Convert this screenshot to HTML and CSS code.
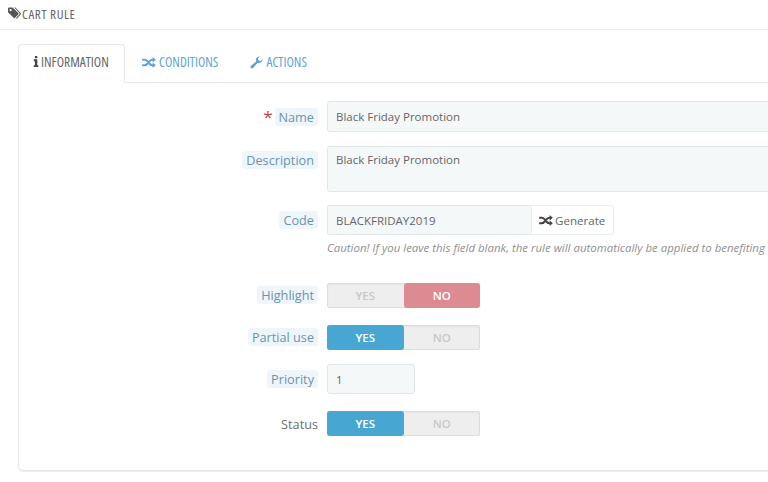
FILE: index.html
```html
<!DOCTYPE html>
<html lang="en">
<head>
<meta charset="utf-8">
<title>Cart rule</title>
<link rel="stylesheet" href="styles.css">
</head>
<body>
<div class="page">
  <header class="page-head">
    <svg class="ico ico-tag" viewBox="0 0 14 12"><path d="M0 1.2 Q0 0 1.2 0 H5 L11 6 Q11.8 6.9 11 7.7 L7.6 11.2 Q6.8 12 6 11.2 L0 5.2 Z M2.8 1.6 A1.2 1.2 0 1 0 2.8 4 A1.2 1.2 0 1 0 2.8 1.6 Z M6.8 0 H8 L13.6 5.9 Q14.3 6.9 13.6 7.7 L10 11.6 Q9.2 12.2 8.4 11.6 L12.2 7.6 Q12.9 6.9 12.2 6 Z" fill-rule="evenodd"/></svg>
    <span class="cond cond-head">CART RULE</span>
  </header>
  <nav class="tabs">
    <div class="tab tab-active">
      <svg class="ico ico-info" viewBox="0 0 6 12"><path d="M1.8 0 H4.4 V2.4 H1.8 Z M0.6 3.6 H4.4 V10 H5.6 V12 H0.6 V10 H1.8 V5.6 H0.6 Z"/></svg>
      <span class="cond">INFORMATION</span>
    </div>
    <div class="tab tab-cond">
      <svg class="ico ico-shuffle" viewBox="0 0 15 12"><path d="M0 3 H3 C6.5 3 7.5 9 11 9 H12 M0 9 H3 C6.5 9 7.5 3 11 3 H12" fill="none" stroke="currentColor" stroke-width="2.3"/><path d="M11.5 0 L15 3 L11.5 6 Z M11.5 6 L15 9 L11.5 12 Z"/></svg>
      <span class="cond">CONDITIONS</span>
    </div>
    <div class="tab tab-act">
      <svg class="ico ico-wrench" viewBox="0 0 13 13"><path d="M12.7 3.1 A3.9 3.9 0 0 1 7.6 6.9 L2.9 12.2 A1.5 1.5 0 0 1 0.8 10.1 L6.1 5.4 A3.9 3.9 0 0 1 9.9 0.3 L7.9 2.4 L8.4 4.6 L10.6 5.1 Z"/></svg>
      <span class="cond">ACTIONS</span>
    </div>
  </nav>
  <main class="panel">
    <div class="row row-name">
      <div class="label-col"><span class="req">*</span><span class="hint">Name</span></div>
      <div class="field wide">Black Friday Promotion</div>
    </div>
    <div class="row row-desc">
      <div class="label-col"><span class="hint">Description</span></div>
      <div class="field wide area">Black Friday Promotion</div>
    </div>
    <div class="row row-code">
      <div class="label-col"><span class="hint">Code</span></div>
      <div class="code-group">
        <div class="field code">BLACKFRIDAY2019</div>
        <div class="gen">
          <svg class="ico ico-gen" viewBox="0 0 15 12"><path d="M0 3 H3 C6.5 3 7.5 9 11 9 H12 M0 9 H3 C6.5 9 7.5 3 11 3 H12" fill="none" stroke="currentColor" stroke-width="2.3"/><path d="M11.5 0 L15 3 L11.5 6 Z M11.5 6 L15 9 L11.5 12 Z"/></svg>
          <span>Generate</span>
        </div>
      </div>
    </div>
    <p class="help">Caution! If you leave this field blank, the rule will automatically be applied to benefiting</p>
    <div class="row row-high">
      <div class="label-col"><span class="hint">Highlight</span></div>
      <div class="switch"><span class="opt">YES</span><span class="opt opt-no">NO</span></div>
    </div>
    <div class="row row-part">
      <div class="label-col"><span class="hint">Partial use</span></div>
      <div class="switch"><span class="opt opt-yes">YES</span><span class="opt">NO</span></div>
    </div>
    <div class="row row-prio">
      <div class="label-col"><span class="hint">Priority</span></div>
      <div class="field prio">1</div>
    </div>
    <div class="row row-stat">
      <div class="label-col"><span class="plain">Status</span></div>
      <div class="switch"><span class="opt opt-yes">YES</span><span class="opt">NO</span></div>
    </div>
  </main>
</div>
</body>
</html>
```
FILE: styles.css
```css
* { box-sizing: border-box; }
html, body { margin: 0; height: 100%; overflow: hidden; background: #fff; }
body { font-family: "Open Sans", "Liberation Sans", sans-serif; font-size: 12px; color: #666; }
.page { width: 768px; height: 482px; overflow: hidden; }
.ico { fill: currentColor; display: block; flex: none; }
.cond { font-family: "Open Sans", sans-serif; font-stretch: 75%; font-size: 13.5px; }
.cond-head { font-size: 13.2px; letter-spacing: 0.6px; }

.page-head {
  height: 30px; border-bottom: 1px solid #eeeeee;
  display: flex; align-items: center; gap: 1px; padding: 0 0 1px 8px;
  color: #666;
}
.ico-tag { width: 13px; height: 12px; color: #555; margin-top: -3px; }

.tabs {
  margin: 14px 0 0 18px; height: 39px; display: flex; align-items: stretch;
  color: #5fa5d3; position: relative; z-index: 1;
}
.tab { display: flex; align-items: center; gap: 3px; height: 38px; padding-bottom: 2px; }
.tab-cond { margin-left: 17px; }
.tab-act { margin-left: 32px; }
.tab-active {
  width: 107px; padding: 0 0 5px 14px; height: 39px; color: #666; background: #fff; gap: 2px;
  border: 1px solid #e4e8ea; border-bottom: 0; border-radius: 4px 4px 0 0;
}
.ico-info { width: 6px; height: 11px; color: #444; }
.ico-shuffle { width: 14px; height: 11px; }
.ico-wrench { width: 13px; height: 13px; }

.panel {
  margin: -1px -40px 0 18px; height: 389px; padding-top: 18px;
  border: 1px solid #e4e8ea; border-radius: 0 0 0 5px;
  box-shadow: 0 1px 1px #eeeeee;
}
.row { display: flex; align-items: center; gap: 9px; }
.label-col { width: 299px; flex: none; text-align: right; font-size: 12.7px; color: #5a8db0; display: flex; justify-content: flex-end; align-items: center; }
.req { color: #c9423d; font-size: 17px; margin-right: 2px; line-height: 16px; }
.hint { background: #eef6fb; padding: 0 4px; border-radius: 3px; line-height: 18px; color: #6b94ae; }
.plain { color: #6e6e6e; }

.field {
  background: #f5f8f9; border: 1px solid #dfe7ea; border-radius: 3px;
  font-size: 11.5px; color: #666; padding: 0 8px; display: flex; align-items: center;
}
.wide { width: 480px; height: 31px; }
.area { height: 46px; align-items: flex-start; padding-top: 5px; }
.code-group { display: flex; }
.code { width: 204px; height: 30px; border-radius: 3px 0 0 3px; border-right: 0; }
.gen {
  width: 83px; height: 30px; border: 1px solid #e8eef0; border-radius: 0 3px 3px 0;
  display: flex; align-items: center; gap: 2px; padding-left: 7px; color: #666; font-size: 11.6px;
}
.ico-gen { width: 14px; height: 11px; color: #444; }
.help { margin: 5px 0 0 308px; width: 600px; font-size: 11.45px; line-height: 16px; font-style: italic; color: #909090; white-space: nowrap; }

.switch { width: 153px; height: 25px; display: flex; background: #eeeeee; border-radius: 3px; box-shadow: inset 0 0 0 1px #dcdcdc, inset 0 1px 2px #d4d4d4; }
.opt { flex: 1; display: flex; align-items: center; justify-content: center; font-size: 11.5px; font-weight: 600; color: #c8c8c8; }
.opt-no { background: #dc8b92; color: #fff; border-radius: 3px; }
.opt-yes { background: #47a7d2; color: #fff; border-radius: 3px; }
.prio { width: 88px; height: 30px; }

.row-desc { margin-top: 14px; }
.row-desc .label-col { align-self: flex-start; padding-top: 5px; }
.row-code { margin-top: 13px; }
.row-high { margin-top: 27px; }
.row-high .label-col, .row-part .label-col { padding-bottom: 2px; }
.row-part { margin-top: 17px; }
.row-prio { margin-top: 14px; }
.row-stat { margin-top: 17px; }
```
